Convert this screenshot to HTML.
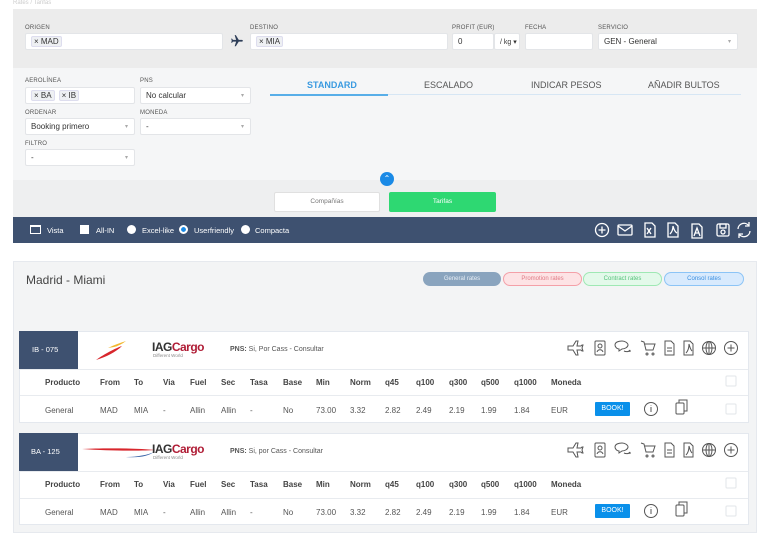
<!DOCTYPE html>
<html><head><meta charset="utf-8"><style>
*{box-sizing:border-box;margin:0;padding:0}
body{width:768px;height:533px;background:#fff;font-family:"Liberation Sans",sans-serif;position:relative;overflow:hidden;color:#333}
.a{position:absolute}
.lbl{position:absolute;font-size:6px;color:#555;letter-spacing:.2px}
.inp{position:absolute;background:#fff;border:1px solid #e3e5e8;border-radius:2px;font-size:8px;color:#333;padding-left:5px;display:flex;align-items:center}
.tag{background:#eef0f3;border:1px solid #dde;border-radius:2px;padding:0 2px;margin-right:4px;font-size:8px}
.dd:after{content:"▾";position:absolute;right:6px;font-size:6px;color:#aaa}
.tab{position:absolute;top:80px;font-size:9px;color:#555}
.th{position:absolute;font-size:8px;font-weight:bold;color:#444}
.td{position:absolute;font-size:8px;color:#555}
.pill{position:absolute;top:272px;height:14px;border-radius:7px;font-size:6px;display:flex;align-items:center;justify-content:center}
</style></head><body>
<div class="a" style="left:13px;top:0;font-size:6px;color:#ccc">Rates / Tarifas</div>
<div class="a" style="left:13px;top:9px;width:744px;height:59px;background:#ececec"></div>
<div class="a" style="left:13px;top:68px;width:744px;height:112px;background:#f5f6f7"></div>
<div class="a" style="left:13px;top:180px;width:744px;height:37px;background:#eeeff0"></div>
<div class="lbl" style="left:25px;top:25px">ORIGEN</div>
<div class="inp" style="left:25px;top:33px;width:198px;height:17px"><span class="tag">× MAD</span></div>
<svg class="a" style="left:228px;top:34px" width="18" height="14" viewBox="0 0 24 24"><path fill="#2e3e58" d="M21 16v-2l-8-5V3.5a1.5 1.5 0 0 0-3 0V9l-8 5v2l8-2.5V19l-2 1.5V22l3.5-1 3.5 1v-1.5L13 19v-5.5z" transform="rotate(90 12 12)"/></svg>
<div class="lbl" style="left:250px;top:25px">DESTINO</div>
<div class="inp" style="left:250px;top:33px;width:198px;height:17px"><span class="tag">× MIA</span></div>
<div class="lbl" style="left:452px;top:25px">PROFIT (EUR)</div>
<div class="inp" style="left:452px;top:33px;width:42px;height:17px">0</div>
<div class="inp" style="left:494px;top:33px;width:26px;height:17px;font-size:7px">/ kg ▾</div>
<div class="lbl" style="left:525px;top:25px">FECHA</div>
<div class="inp" style="left:525px;top:33px;width:68px;height:17px"></div>
<div class="lbl" style="left:598px;top:25px">SERVICIO</div>
<div class="inp dd" style="left:598px;top:33px;width:140px;height:17px">GEN - General</div>

<div class="lbl" style="left:25px;top:78px">AEROLÍNEA</div>
<div class="inp" style="left:25px;top:87px;width:110px;height:17px"><span class="tag">× BA</span><span class="tag">× IB</span></div>
<div class="lbl" style="left:140px;top:78px">PNS</div>
<div class="inp dd" style="left:140px;top:87px;width:111px;height:17px">No calcular</div>
<div class="lbl" style="left:25px;top:110px">ORDENAR</div>
<div class="inp dd" style="left:25px;top:118px;width:110px;height:17px">Booking primero</div>
<div class="lbl" style="left:140px;top:110px">MONEDA</div>
<div class="inp dd" style="left:140px;top:118px;width:111px;height:17px">-</div>
<div class="lbl" style="left:25px;top:141px">FILTRO</div>
<div class="inp dd" style="left:25px;top:149px;width:110px;height:17px">-</div>
<div class="a" style="left:270px;top:94px;width:471px;height:1px;background:#d6e6f4"></div>
<div class="a" style="left:270px;top:94px;width:118px;height:2px;background:#58aee8"></div>
<div class="tab" style="left:307px;color:#3a9ae0;font-weight:bold">STANDARD</div>
<div class="tab" style="left:424px">ESCALADO</div>
<div class="tab" style="left:531px">INDICAR PESOS</div>
<div class="tab" style="left:648px">AÑADIR BULTOS</div>
<div class="a" style="left:380px;top:172px;width:14px;height:14px;border-radius:50%;background:#1a8ae6;color:#fff;font-size:8px;text-align:center;line-height:14px">⌃</div>
<div class="a" style="left:274px;top:192px;width:106px;height:20px;background:#fff;border:1px solid #e0e0e0;border-radius:2px;font-size:6.5px;color:#777;text-align:center;line-height:18px">Compañías</div>
<div class="a" style="left:389px;top:192px;width:107px;height:20px;background:#2ed872;border-radius:2px;font-size:6.5px;color:#fff;text-align:center;line-height:20px">Tarifas</div>

<div class="a" style="left:13px;top:217px;width:744px;height:26px;background:#3e5170;color:#fff;font-size:7.5px">
 <div class="a" style="left:17px;top:8px;width:11px;height:9px;border:1px solid #fff;border-top-width:2px"></div>
 <div class="a" style="left:34px;top:9px">Vista</div>
 <div class="a" style="left:67px;top:8px;width:9px;height:9px;background:#fff"></div>
 <div class="a" style="left:83px;top:9px">All-IN</div>
 <div class="a" style="left:114px;top:8px;width:9px;height:9px;background:#fff;border-radius:50%"></div>
 <div class="a" style="left:129px;top:9px">Excel-like</div>
 <div class="a" style="left:166px;top:8px;width:9px;height:9px;background:#fff;border-radius:50%;border:2.5px solid #fff;box-shadow:inset 0 0 0 3px #1a8ae6"></div>
 <div class="a" style="left:181px;top:9px">Userfriendly</div>
 <div class="a" style="left:228px;top:8px;width:9px;height:9px;background:#fff;border-radius:50%"></div>
 <div class="a" style="left:242px;top:9px">Compacta</div>
 <svg class="a" style="left:580px;top:4px" width="160" height="18" viewBox="0 0 160 18" fill="none" stroke="#fff" stroke-width="1.3">
  <circle cx="9" cy="9" r="6.5"/><path d="M9 5.5v7M5.5 9h7"/>
  <rect x="25" y="4" width="14" height="10" rx="1"/><path d="M25 5l7 5 7-5"/>
  <path d="M52 2h7l3 3v11h-10z"/><path d="M54 7l4 6M58 7l-4 6"/>
  <path d="M75 2h7l3 3v11h-10z"/><path d="M77 13c2-2 3-5 3-8 1 4 2 6 4 7"/>
  <path d="M99 3h7l3 3v11h-10z"/><path d="M101 15l3-8 3 8M102 12h4"/>
  <rect x="124" y="3" width="12" height="12" rx="1.5"/><rect x="127" y="3" width="6" height="4"/><circle cx="130" cy="11" r="2"/>
  <path d="M145 8a6 6 0 0 1 11-3M157 10a6 6 0 0 1-11 3"/><path d="M156 1v4h-4M146 17v-4h4"/>
 </svg>
</div>

<div class="a" style="left:13px;top:261px;width:744px;height:272px;background:#f3f4f5;border:1px solid #e6e9ee"></div>
<div class="a" style="left:26px;top:273px;font-size:12px;color:#444">Madrid - Miami</div>
<div class="pill" style="left:423px;width:78px;background:#8aa4be;color:#e8eef5">General rates</div>
<div class="pill" style="left:503px;width:79px;background:#fde3e5;border:1px solid #f4a0a8;color:#e07a85">Promotion rates</div>
<div class="pill" style="left:583px;width:79px;background:#e3f9ea;border:1px solid #9fe8b4;color:#55c27a">Contract rates</div>
<div class="pill" style="left:664px;width:80px;background:#d8eafd;border:1px solid #8cc4f6;color:#3a8ee0">Consol rates</div>

<div class="a" style="left:19px;top:331px;width:730px;height:92px;background:#fff;border:1px solid #e4e8ee">
 <div class="a" style="left:-1px;top:-1px;width:59px;height:38px;background:#3e5170;color:#fff;font-size:7.5px;line-height:38px;padding-left:13px">IB - 075</div>
 <svg class="a" style="left:74px;top:8px" width="34" height="22" viewBox="0 0 34 22"><path d="M2 20C10 14 22 8 28 6 22 12 12 17 2 20z" fill="#d8262c"/><path d="M14 8c6-3 12-5 18-7-4 3-8 5-12 6z" fill="#f2b830"/></svg>
 <div class="a" style="left:132px;top:8px;font-size:12px;font-weight:bold;color:#333;letter-spacing:-.5px">IAG<span style="color:#b01d36">Cargo</span></div>
 <div class="a" style="left:133px;top:21px;font-size:4.5px;color:#888">Different World</div>
 <div class="a" style="left:210px;top:14px;font-size:7px;color:#555"><b>PNS:</b> Si, Por Cass - Consultar</div>
 <div class="a" style="left:0;top:37px;width:728px;height:1px;background:#e8ebef"></div>
 <div class="a" style="left:0;top:63px;width:728px;height:1px;background:#e8ebef"></div>
</div>
<div class="a" style="left:19px;top:433px;width:730px;height:92px;background:#fff;border:1px solid #e4e8ee">
 <div class="a" style="left:-1px;top:-1px;width:59px;height:38px;background:#3e5170;color:#fff;font-size:7.5px;line-height:38px;padding-left:12px">BA - 125</div>
 <svg class="a" style="left:62px;top:12px" width="76" height="14" viewBox="0 0 76 14"><path d="M0 3C20 2 50 2 74 4 60 5 30 5 0 3z" fill="#d8262c"/><path d="M44 11c10 0 22-2 28-5-6 4-14 6-28 5z" fill="#3a64a8"/></svg>
 <div class="a" style="left:132px;top:8px;font-size:12px;font-weight:bold;color:#333;letter-spacing:-.5px">IAG<span style="color:#b01d36">Cargo</span></div>
 <div class="a" style="left:133px;top:21px;font-size:4.5px;color:#888">Different World</div>
 <div class="a" style="left:210px;top:14px;font-size:7px;color:#555"><b>PNS:</b> Si, por Cass - Consultar</div>
 <div class="a" style="left:0;top:37px;width:728px;height:1px;background:#e8ebef"></div>
 <div class="a" style="left:0;top:64px;width:728px;height:1px;background:#e8ebef"></div>
</div>

<svg class="a" style="left:0;top:0" width="768" height="533" fill="none" stroke="#555" stroke-width="1">
 <g id="ic">
  <path d="M568 346h5l3-5h2l-1 5h4l1-1h1l-1 3 1 3h-1l-1-1h-4l1 5h-2l-3-5h-5z"/>
  <rect x="595" y="341" width="10" height="14" rx="1"/><circle cx="600" cy="346" r="2"/><path d="M597 352c1-3 5-3 6 0"/>
  <path d="M615 345c0-3 4-4 7-4s6 2 6 4-3 4-6 4l-3 2v-2c-2 0-4-2-4-4z"/><path d="M624 351c2 1 5 1 6-1v2"/>
  <path d="M641 341l3 1 2 8h7l2-6h-10"/><circle cx="647" cy="354" r="1"/><circle cx="653" cy="354" r="1"/>
  <path d="M665 341h6l3 3v11h-9z"/><path d="M667 348h5M667 351h5"/>
  <path d="M684 341h6l3 3v11h-9z"/><path d="M686 353c2-2 3-5 3-9 1 4 2 6 3 7"/>
  <circle cx="709" cy="348" r="6.5"/><path d="M702.5 348h13M709 341.5v13"/><ellipse cx="709" cy="348" rx="3" ry="6.5"/>
  <circle cx="731" cy="348" r="6.5"/><path d="M731 344.5v7M727.5 348h7"/>
 </g>
 <use href="#ic" transform="translate(0,102)"/>
 <circle cx="651" cy="409" r="6.5"/><path d="M651 407v5M651 405v.5"/>
 <rect x="676" y="403" width="8" height="11" rx="1"/><path d="M679 403v-3h8v11h-3"/>
 <circle cx="651" cy="511" r="6.5"/><path d="M651 509v5M651 507v.5"/>
 <rect x="676" y="505" width="8" height="11" rx="1"/><path d="M679 505v-3h8v11h-3"/>
 <g stroke="#e2e5e8"><rect x="726" y="376" width="10" height="10" rx="1"/><rect x="726" y="404" width="10" height="10" rx="1"/><rect x="726" y="478" width="10" height="10" rx="1"/><rect x="726" y="506" width="10" height="10" rx="1"/></g>
</svg>

<div class="th" style="left:45px;top:378px">Producto</div><div class="th" style="left:100px;top:378px">From</div><div class="th" style="left:134px;top:378px">To</div><div class="th" style="left:163px;top:378px">Via</div><div class="th" style="left:190px;top:378px">Fuel</div><div class="th" style="left:221px;top:378px">Sec</div><div class="th" style="left:250px;top:378px">Tasa</div><div class="th" style="left:283px;top:378px">Base</div><div class="th" style="left:316px;top:378px">Min</div><div class="th" style="left:350px;top:378px">Norm</div><div class="th" style="left:385px;top:378px">q45</div><div class="th" style="left:416px;top:378px">q100</div><div class="th" style="left:449px;top:378px">q300</div><div class="th" style="left:481px;top:378px">q500</div><div class="th" style="left:514px;top:378px">q1000</div><div class="th" style="left:551px;top:378px">Moneda</div>
<div class="td" style="left:45px;top:406px">General</div><div class="td" style="left:100px;top:406px">MAD</div><div class="td" style="left:134px;top:406px">MIA</div><div class="td" style="left:163px;top:406px">-</div><div class="td" style="left:190px;top:406px">Allin</div><div class="td" style="left:221px;top:406px">Allin</div><div class="td" style="left:250px;top:406px">-</div><div class="td" style="left:283px;top:406px">No</div><div class="td" style="left:316px;top:406px">73.00</div><div class="td" style="left:350px;top:406px">3.32</div><div class="td" style="left:385px;top:406px">2.82</div><div class="td" style="left:416px;top:406px">2.49</div><div class="td" style="left:449px;top:406px">2.19</div><div class="td" style="left:481px;top:406px">1.99</div><div class="td" style="left:514px;top:406px">1.84</div><div class="td" style="left:551px;top:406px">EUR</div>
<div class="a" style="left:595px;top:402px;width:35px;height:14px;background:#0a90ea;color:#fff;font-size:7px;text-align:center;line-height:14px;border-radius:1px">BOOK!</div>
<div class="th" style="left:45px;top:480px">Producto</div><div class="th" style="left:100px;top:480px">From</div><div class="th" style="left:134px;top:480px">To</div><div class="th" style="left:163px;top:480px">Via</div><div class="th" style="left:190px;top:480px">Fuel</div><div class="th" style="left:221px;top:480px">Sec</div><div class="th" style="left:250px;top:480px">Tasa</div><div class="th" style="left:283px;top:480px">Base</div><div class="th" style="left:316px;top:480px">Min</div><div class="th" style="left:350px;top:480px">Norm</div><div class="th" style="left:385px;top:480px">q45</div><div class="th" style="left:416px;top:480px">q100</div><div class="th" style="left:449px;top:480px">q300</div><div class="th" style="left:481px;top:480px">q500</div><div class="th" style="left:514px;top:480px">q1000</div><div class="th" style="left:551px;top:480px">Moneda</div>
<div class="td" style="left:45px;top:508px">General</div><div class="td" style="left:100px;top:508px">MAD</div><div class="td" style="left:134px;top:508px">MIA</div><div class="td" style="left:163px;top:508px">-</div><div class="td" style="left:190px;top:508px">Allin</div><div class="td" style="left:221px;top:508px">Allin</div><div class="td" style="left:250px;top:508px">-</div><div class="td" style="left:283px;top:508px">No</div><div class="td" style="left:316px;top:508px">73.00</div><div class="td" style="left:350px;top:508px">3.32</div><div class="td" style="left:385px;top:508px">2.82</div><div class="td" style="left:416px;top:508px">2.49</div><div class="td" style="left:449px;top:508px">2.19</div><div class="td" style="left:481px;top:508px">1.99</div><div class="td" style="left:514px;top:508px">1.84</div><div class="td" style="left:551px;top:508px">EUR</div>
<div class="a" style="left:595px;top:504px;width:35px;height:14px;background:#0a90ea;color:#fff;font-size:7px;text-align:center;line-height:14px;border-radius:1px">BOOK!</div>
</body></html>
